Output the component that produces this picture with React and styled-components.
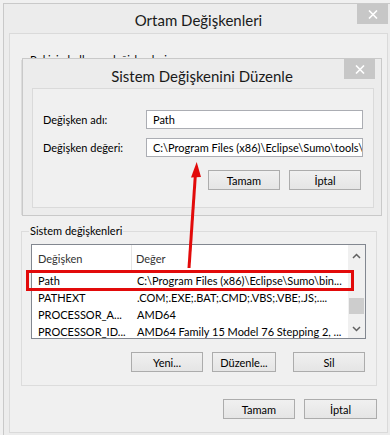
import React from "react";
import styled, { createGlobalStyle } from "styled-components";

const GlobalStyle = createGlobalStyle`
	html, body {
		margin: 0;
		padding: 0;
		background: #f0f0f0;
	}
	body {
		font-family: Lato, "Noto Sans", sans-serif;
		font-size: 11px;
		color: #000;
	}
`;

const Desktop = styled.div`
	position: relative;
	width: 390px;
	height: 435px;
	overflow: hidden;
	background: #f0f0f0;
`;

const Window = styled.div`
	position: absolute;
	left: ${p => p.$x}px;
	top: ${p => p.$y}px;
	width: ${p => p.$w}px;
	height: ${p => p.$h}px;
	box-sizing: border-box;
	display: flex;
	flex-direction: column;
	background: #ececec;
	border: 1px solid #c9c9c9;
`;

const TitleBar = styled.div`
	flex: none;
	height: 29px;
	display: grid;
	grid-template-columns: ${p => p.$side}px 1fr ${p => p.$side}px;
	align-items: start;
`;

const Title = styled.div`
	grid-column: 2;
	text-align: center;
	font-size: 15px;
	line-height: 20px;
	padding-top: ${p => p.$pt}px;
	color: #1a1a1a;
	white-space: nowrap;
`;

const CloseButton = styled.div`
	grid-column: 3;
	justify-self: end;
	margin-right: ${p => p.$mr}px;
	width: 31px;
	height: 20px;
	background: #c7c7c7;
	display: flex;
	align-items: center;
	justify-content: center;
`;

const Client = styled.div`
	flex: none;
	height: ${p => p.$h}px;
	box-sizing: border-box;
	margin: 0 ${p => p.$mr}px 0 ${p => p.$ml}px;
	background: #f0f0f0;
	border: 1px solid #dadada;
	display: flex;
	flex-direction: column;
`;

const OuterBody = styled.div`
	display: flex;
	flex-direction: column;
	padding: 18px 10px 0 11px;
	gap: 8px;
`;

const Group = styled.fieldset`
	margin: 0;
	padding: 5px 10px 13px 9px;
	border: 1px solid #dcdcdc;
	min-width: 0;
	display: flex;
	flex-direction: column;
`;

const Legend = styled.legend`
	padding: 0 1px;
	margin-left: -2px;
	line-height: 16px;
	white-space: nowrap;
`;

const Spacer = styled.div`
	height: ${p => p.$h}px;
`;

const ListWrap = styled.div`
	position: relative;
`;

const ListView = styled.div`
	height: 95px;
	box-sizing: border-box;
	border: 1px solid #828790;
	background: #fff;
	display: flex;
	overflow: hidden;
`;

const Rows = styled.div`
	flex: 1;
	min-width: 0;
	display: flex;
	flex-direction: column;
`;

const HeaderRow = styled.div`
	flex: none;
	height: 27px;
	display: grid;
	grid-template-columns: 100px 1fr;
	align-items: center;
`;

const HeaderCell = styled.div`
	height: 100%;
	display: flex;
	align-items: center;
	padding-left: ${p => p.$pl}px;
	border-right: ${p => (p.$divider ? "1px solid #e5e5e5" : "none")};
	color: #333;
`;

const Row = styled.div`
	flex: none;
	height: 17px;
	display: grid;
	grid-template-columns: 100px 1fr;
	align-items: center;
	line-height: 17px;
`;

const Cell = styled.div`
	padding-left: ${p => p.$pl}px;
	white-space: nowrap;
	overflow: hidden;
`;

const ScrollBar = styled.div`
	flex: none;
	width: 17px;
	background: #f0f0f0;
	display: flex;
	flex-direction: column;
`;

const ScrollArrow = styled.div`
	flex: none;
	height: ${p => p.$h}px;
	display: flex;
	align-items: center;
	justify-content: center;
`;

const Track = styled.div`
	flex: 1;
	display: flex;
	flex-direction: column;
`;

const Thumb = styled.div`
	margin: ${p => p.$top}px 1px 0 1px;
	height: 16px;
	background: #cdcdcd;
`;

const Highlight = styled.div`
	position: absolute;
	left: -5px;
	top: 26px;
	width: 328px;
	height: 21px;
	box-sizing: border-box;
	border: 3px solid #e20a0a;
	pointer-events: none;
`;

const ButtonRow = styled.div`
	display: flex;
	justify-content: flex-end;
	gap: ${p => p.$gap}px;
	margin-top: ${p => p.$mt}px;
	padding-right: ${p => p.$pr}px;
`;

const Button = styled.div`
	width: ${p => p.$w || 72}px;
	height: 20px;
	box-sizing: border-box;
	margin-left: ${p => p.$ml || 0}px;
	border: 1px solid #acacac;
	background: linear-gradient(#f0f0f0, #e5e5e5);
	display: flex;
	align-items: center;
	justify-content: center;
	color: #000;
`;

const DialogBody = styled.div`
	padding: 21px 10px 0 10px;
	display: flex;
	flex-direction: column;
`;

const FieldGrid = styled.div`
	display: grid;
	grid-template-columns: 103px 217px;
	row-gap: 9px;
	align-items: center;
`;

const Label = styled.div`
	white-space: nowrap;
`;

const Input = styled.div`
	height: 19px;
	box-sizing: border-box;
	border: 1px solid #abadb3;
	background: #fff;
	padding-left: 6px;
	display: flex;
	align-items: center;
	white-space: nowrap;
	overflow: hidden;
`;

const Arrow = styled.svg`
	position: absolute;
	left: 180px;
	top: 155px;
	overflow: visible;
`;

function CloseIcon() {
	return (
		<svg width="10" height="9" viewBox="0 0 10 9">
			<path d="M1 0.5 L9 8.5 M9 0.5 L1 8.5" stroke="#fff" strokeWidth="1.6" />
		</svg>
	);
}

function Chevron({ down }) {
	return (
		<svg width="9" height="6" viewBox="0 0 9 6">
			<path
				d={down ? "M1 1 L4.5 4.5 L8 1" : "M1 5 L4.5 1.5 L8 5"}
				fill="none"
				stroke="#606060"
				strokeWidth="1.5"
			/>
		</svg>
	);
}

const vars = [
	["Path", "C:\\Program Files (x86)\\Eclipse\\Sumo\\bin..."],
	["PATHEXT", ".COM;.EXE;.BAT;.CMD;.VBS;.VBE;.JS;...."],
	["PROCESSOR_A...", "AMD64"],
	["PROCESSOR_ID...", "AMD64 Family 15 Model 76 Stepping 2, ..."],
];

export default function App() {
	return (
		<>
			<GlobalStyle />
			<Desktop>
				<Window $x={3} $y={3} $w={391} $h={436}>
					<TitleBar $side={36}>
						<Title $pt={6}>Ortam Değişkenleri</Title>
						<CloseButton $mr={5}>
							<CloseIcon />
						</CloseButton>
					</TitleBar>
					<Client $h={400} $ml={5} $mr={5}>
						<OuterBody>
							<Group>
								<Legend>Pul için kullanıcı değişkenleri</Legend>
								<Spacer $h={128} />
							</Group>
							<Group>
								<Legend>Sistem değişkenleri</Legend>
								<ListWrap>
									<ListView>
										<Rows>
											<HeaderRow>
												<HeaderCell $pl={6} $divider>Değişken</HeaderCell>
												<HeaderCell $pl={4}>Değer</HeaderCell>
											</HeaderRow>
											{vars.map(([name, value]) => (
												<Row key={name}>
													<Cell $pl={6}>{name}</Cell>
													<Cell $pl={5}>{value}</Cell>
												</Row>
											))}
										</Rows>
										<ScrollBar>
											<ScrollArrow $h={22}>
												<Chevron />
											</ScrollArrow>
											<Track>
												<Thumb $top={31} />
											</Track>
											<ScrollArrow $h={18}>
												<Chevron down />
											</ScrollArrow>
										</ScrollBar>
									</ListView>
									<Highlight />
								</ListWrap>
								<ButtonRow $gap={0} $mt={13} $pr={1}>
									<Button>Yeni...</Button>
									<Button $w={64} $ml={9}>Düzenle...</Button>
									<Button $ml={17}>Sil</Button>
								</ButtonRow>
							</Group>
						</OuterBody>
						<ButtonRow $gap={9} $mt={13} $pr={10}>
							<Button>Tamam</Button>
							<Button $w={73}>İptal</Button>
						</ButtonRow>
					</Client>
				</Window>

				<Window $x={22} $y={58} $w={360} $h={158}>
					<TitleBar $side={38}>
						<Title $pt={7}>Sistem Değişkenini Düzenle</Title>
						<CloseButton $mr={6}>
							<CloseIcon />
						</CloseButton>
					</TitleBar>
					<Client $h={120} $ml={9} $mr={7}>
						<DialogBody>
							<FieldGrid>
								<Label>Değişken adı:</Label>
								<Input>Path</Input>
								<Label>Değişken değeri:</Label>
								<Input>C:\Program Files (x86)\Eclipse\Sumo\tools\</Input>
							</FieldGrid>
							<ButtonRow $gap={9} $mt={13} $pr={2}>
								<Button>Tamam</Button>
								<Button>İptal</Button>
							</ButtonRow>
						</DialogBody>
					</Client>
				</Window>

				<Arrow width="30" height="120" viewBox="0 0 30 120">
					<line x1="9" y1="113" x2="15.3" y2="21" stroke="#e20a0a" strokeWidth="3" />
					<polygon points="16.7,7 11,22.5 21,22" fill="#e20a0a" />
				</Arrow>
			</Desktop>
		</>
	);
}
